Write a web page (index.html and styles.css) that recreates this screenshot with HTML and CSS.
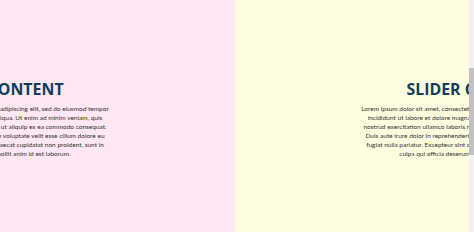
FILE: index.html
```html
<!DOCTYPE html>
<html lang="en">
<head>
<meta charset="utf-8">
<title>Slider</title>
<link rel="stylesheet" href="styles.css">
</head>
<body>
<div class="page">
  <div class="viewport">
    <div class="track">
      <section class="slide slide-pink">
        <h2 class="slide-title">SLIDER CONTENT</h2>
        <p class="slide-text">Lorem ipsum dolor sit amet, consectetur adipiscing elit, sed do eiusmod tempor<br>incididunt ut labore et dolore magna aliqua. Ut enim ad minim veniam, quis<br>nostrud exercitation ullamco laboris nisi ut aliquip ex ea commodo consequat.<br>Duis aute irure dolor in reprehenderit in voluptate velit esse cillum dolore eu<br>fugiat nulla pariatur. Excepteur sint occaecat cupidatat non proident, sunt in<br>culpa qui officia deserunt mollit anim id est laborum.</p>
      </section>
      <section class="slide slide-yellow">
        <h2 class="slide-title">SLIDER CONTENT</h2>
        <p class="slide-text">Lorem ipsum dolor sit amet, consectetur adipiscing elit, sed do eiusmod tempor<br>incididunt ut labore et dolore magna aliqua. Ut enim ad minim veniam, quis<br>nostrud exercitation ullamco laboris nisi ut aliquip ex ea commodo consequat.<br>Duis aute irure dolor in reprehenderit in voluptate velit esse cillum dolore eu<br>fugiat nulla pariatur. Excepteur sint occaecat cupidatat non proident, sunt in<br>culpa qui officia deserunt mollit anim id est laborum.</p>
      </section>
    </div>
  </div>
  <div class="scrollbar">
    <div class="scroll-arrow"></div>
    <div class="scroll-track"><div class="scroll-thumb"></div></div>
    <div class="scroll-arrow"></div>
  </div>
</div>
</body>
</html>
```

FILE: styles.css
```css
html, body {
  margin: 0;
  padding: 0;
}
body {
  font-family: Lato, "Open Sans", sans-serif;
  background: #ffffff;
}
.page {
  display: flex;
  width: 474px;
  height: 232px;
  overflow: hidden;
}
.viewport {
  flex: 1;
  overflow: hidden;
}
.track {
  display: flex;
  height: 100%;
  transform: translateX(-242px);
}
.slide {
  flex: 0 0 477px;
  height: 100%;
  box-sizing: border-box;
  display: flex;
  flex-direction: column;
  align-items: center;
  padding-top: 78px;
}
.slide-pink {
  background: #fde7f3;
}
.slide-yellow {
  background: #fefde0;
}
.slide-title {
  margin: 0;
  font-family: "Open Sans", sans-serif;
  font-size: 15.9px;
  line-height: 22px;
  font-weight: 700;
  color: #123c5b;
}
.slide-text {
  margin: 5px 0 0;
  white-space: nowrap;
  text-align: center;
  font-size: 6.5px;
  line-height: 8.9px;
  color: #333333;
}
.scrollbar {
  flex: 0 0 5px;
  display: flex;
  flex-direction: column;
  background: #f1f1f1;
}
.scroll-arrow {
  height: 8px;
}
.scroll-track {
  flex: 1;
  padding-top: 60px;
}
.scroll-thumb {
  height: 87px;
  background: #c1c1c1;
}
```
